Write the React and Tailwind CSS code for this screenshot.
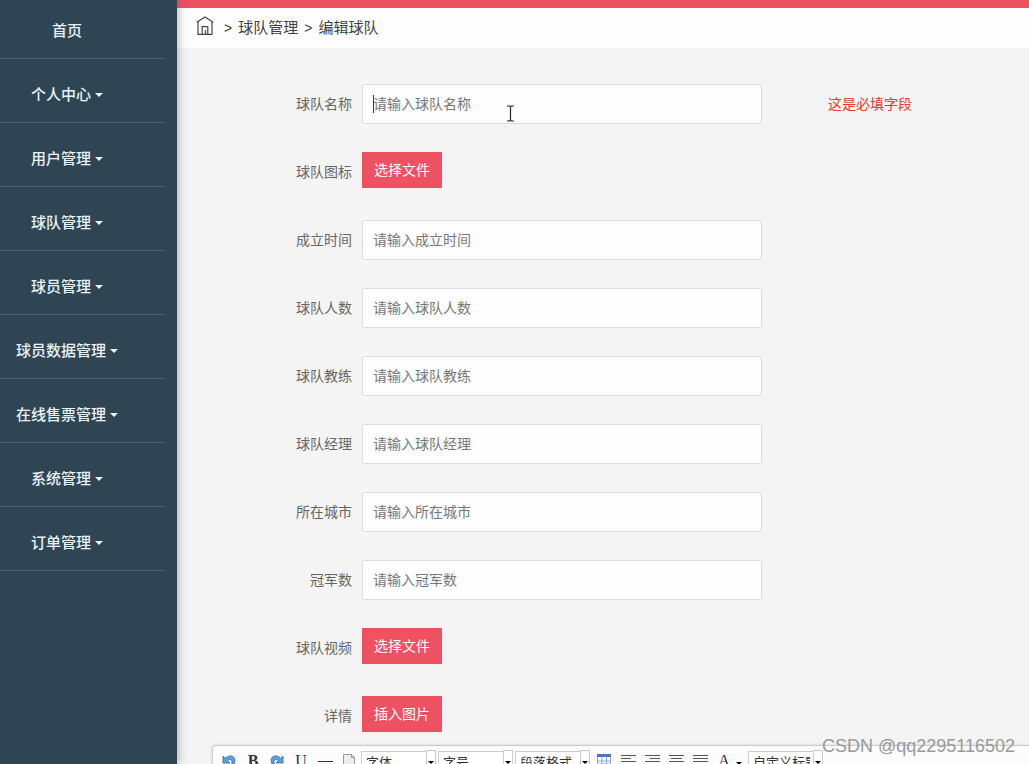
const menu = ['个人中心', '用户管理', '球队管理', '球员管理', '球员数据管理', '在线售票管理', '系统管理', '订单管理'];

const fields = [
  { id: 'name', label: '球队名称', type: 'text', required: true },
  { id: 'icon', label: '球队图标', type: 'button', action: '选择文件' },
  { id: 'founded', label: '成立时间', type: 'text' },
  { id: 'members', label: '球队人数', type: 'text' },
  { id: 'coach', label: '球队教练', type: 'text' },
  { id: 'manager', label: '球队经理', type: 'text' },
  { id: 'city', label: '所在城市', type: 'text' },
  { id: 'titles', label: '冠军数', type: 'text' },
  { id: 'video', label: '球队视频', type: 'button', action: '选择文件' },
  { id: 'detail', label: '详情', type: 'button', action: '插入图片' },
];

const Caret = ({ className }) => (
  <svg viewBox="0 0 8 4" className={className} fill="currentColor" aria-hidden="true">
    <path d="M0 0h8L4 4z" />
  </svg>
);

const Sidebar = () => (
  <nav className="relative z-10 w-[177px] shrink-0 bg-[#304554] text-[15px] leading-6 font-medium text-[#e8f4fa] shadow-[2px_0_8px_rgba(60,75,75,0.35)]">
    <ul className="mr-3">
      <li className="border-b border-[#4b6070] pt-[19px] pr-[31px] pb-[15px] text-center">
        <a href="#home">首页</a>
      </li>
      {menu.map((item) => (
        <li key={item} className="border-b border-[#4b6070] pt-6 pr-[31px] pb-[15px]">
          <button type="button" className="flex w-full items-center justify-center gap-1">
            {item}
            <Caret className="h-1 w-2" />
          </button>
        </li>
      ))}
    </ul>
  </nav>
);

const Breadcrumb = () => (
  <div className="flex h-10 shrink-0 items-center bg-[#fefefe] pl-[19px] text-[15px] text-[#404040]">
    <a href="#home" aria-label="首页" className="mr-2.5 pb-1">
      <svg viewBox="0 0 18 20" className="h-5 w-[18px]" fill="none" stroke="#444" strokeWidth="1.2">
        <path d="M.7 6.2 9 1l8.300 5.200M2 5.800V18.400h14V5.800M6.200 18.400V10.700h5.600v7.700M9.500 18.400v-4.500" />
      </svg>
    </a>
    <span className="text-sm">&gt;</span>
    <a href="#team" className="mx-1.5">球队管理</a>
    <span className="text-sm">&gt;</span>
    <span className="ml-1.5">编辑球队</span>
  </div>
);

const Field = ({ field }) => (
  <div className="flex h-10">
    <label htmlFor={field.id} className="mr-2.5 w-[175px] shrink-0 text-right leading-10 text-[#666]">
      {field.label}
    </label>
    {field.type === 'text' ? (
      <div className="relative w-full max-w-[400px]">
        <input
          id={field.id}
          type="text"
          placeholder={`请输入${field.label}`}
          className="h-full w-full rounded-xs border border-[#dcdcdc] bg-[#fefefe] px-2.5 outline-none placeholder:text-[#777]"
        />
        {field.required && (
          <>
            <span className="absolute top-[11px] left-[11px] h-[18px] w-px bg-[#333]" />
            {/* Mouse pointer */}
            <svg viewBox="0 0 9 17" className="absolute top-[21px] left-36 h-[17px] w-[9px]" fill="none" stroke="#222" strokeWidth="1.2">
              <path d="M1 1h2.500l1 .8 1-.8H8M4.500 1.500v14M1 16h2.500l1-.8 1 .8H8" />
            </svg>
          </>
        )}
      </div>
    ) : (
      <button id={field.id} type="button" className="h-9 w-20 bg-[#ee5162] text-white">
        {field.action}
      </button>
    )}
    {field.required && <span className="ml-[66px] shrink-0 leading-10 text-[#e8392f]">这是必填字段</span>}
  </div>
);

const Undo = ({ flip }) => (
  <svg viewBox="0 0 14 14" className={flip ? 'h-3.5 w-3.5 -scale-x-100' : 'h-3.5 w-3.5'}>
    <path d="M1 2v7h7L5.600 6.600C7.500 4.800 10 5.500 10 8c0 2-1 3.500-2.500 4.800 3-.6 5.500-2.800 5.500-6.300C13 1.500 7 .3 3.400 4.200z" fill="#5b9fdc" stroke="#2c6db0" strokeWidth=".8" />
  </svg>
);

const Page = () => (
  <svg viewBox="0 0 14 16" className="h-4 w-3.5" fill="#eee" stroke="#999">
    <path d="M1.500 1.500h8l3 3v10h-11z" />
    <path d="M9.500 1.500v3h3" fill="#ccc" />
  </svg>
);

const Grid = () => (
  <svg viewBox="0 0 14 14" className="h-3.5 w-3.5" fill="#fff" stroke="#8da6cf">
    <path d="M.5.5h13v13H.5zM.5 7h13M.5 10h13M5 3v10M9.500 3v10" />
    <path d="M0 1.500h14" stroke="#4a76c4" strokeWidth="3" />
  </svg>
);

const aligns = [
  { label: '左对齐', d: 'M0 1.500h15M0 4.500h10M0 7.500h15M0 10.500h10M0 13.500h15' },
  { label: '右对齐', d: 'M0 1.500h15M5 4.500h10M0 7.500h15M5 10.500h10M0 13.500h15' },
  { label: '居中', d: 'M0 1.500h15M2 4.500h11M0 7.500h15M2 10.500h11M0 13.500h15' },
  { label: '两端对齐', d: 'M0 1.500h15M0 4.500h15M0 7.500h15M0 10.500h15M0 13.500h15' },
];

const Tool = ({ label, children }) => (
  <button
    type="button"
    aria-label={label}
    className="flex h-[22px] w-6 shrink-0 items-center justify-center font-['Liberation_Serif',serif] text-base leading-5 text-[#333]"
  >
    {children}
  </button>
);

const Picker = ({ label }) => (
  <div className="relative mr-0.5 w-[75px] shrink-0">
    <select aria-label={label} className="h-6 w-full appearance-none border border-[#ccc] bg-white pr-3 pl-1 text-[13px] text-[#333]">
      <option>{label}</option>
    </select>
    <span className="pointer-events-none absolute inset-y-0 right-0 flex w-2.5 items-center justify-center border border-[#ccc] bg-white text-black">
      <Caret className="h-[3px] w-[6px] shrink-0" />
    </span>
  </div>
);

const Toolbar = () => (
  <div className="mt-[9px] ml-[35px] flex h-[34px] shrink-0 items-start overflow-hidden rounded-tl border-t border-l border-[#ccc] bg-[#fcfcfc] pt-1 pl-1 shadow-[0_0_3px_rgba(0,0,0,0.15)]">
    <Tool label="撤销"><Undo /></Tool>
    <Tool label="加粗"><b>B</b></Tool>
    <Tool label="重做"><Undo flip /></Tool>
    <Tool label="下划线"><span className="underline">U</span></Tool>
    <Tool label="分隔线"><span className="h-px w-[15px] bg-[#333]" /></Tool>
    <Tool label="新建"><Page /></Tool>
    <Picker label="字体" />
    <Picker label="字号" />
    <Picker label="段落格式" />
    <Tool label="表格"><Grid /></Tool>
    {aligns.map(({ label, d }) => (
      <Tool key={label} label={label}>
        <svg viewBox="0 0 15 15" className="h-[15px] w-[15px]" stroke="#555">
          <path d={d} />
        </svg>
      </Tool>
    ))}
    <Tool label="字体颜色">A</Tool>
    <Caret className="mt-3 mr-1.5 h-[3px] w-[6px] shrink-0" />
    <Picker label="自定义标题" />
  </div>
);

const App = () => (
  <div className="relative flex h-screen overflow-hidden bg-[#f4f4f4] font-['Liberation_Sans','Noto_Sans_CJK_SC',sans-serif]">
    <Sidebar />
    <main className="flex min-w-0 flex-1 flex-col overflow-hidden border-t-8 border-[#ee5260]">
      <Breadcrumb />
      <form className="flex shrink-0 flex-col gap-7 pt-9 text-sm">
        {fields.map((field) => (
          <Field key={field.id} field={field} />
        ))}
      </form>
      <Toolbar />
    </main>
    {/* Watermark */}
    <span className="absolute right-3.5 bottom-1.5 text-lg leading-6 text-[#999]">CSDN @qq2295116502</span>
  </div>
);

export default App;
